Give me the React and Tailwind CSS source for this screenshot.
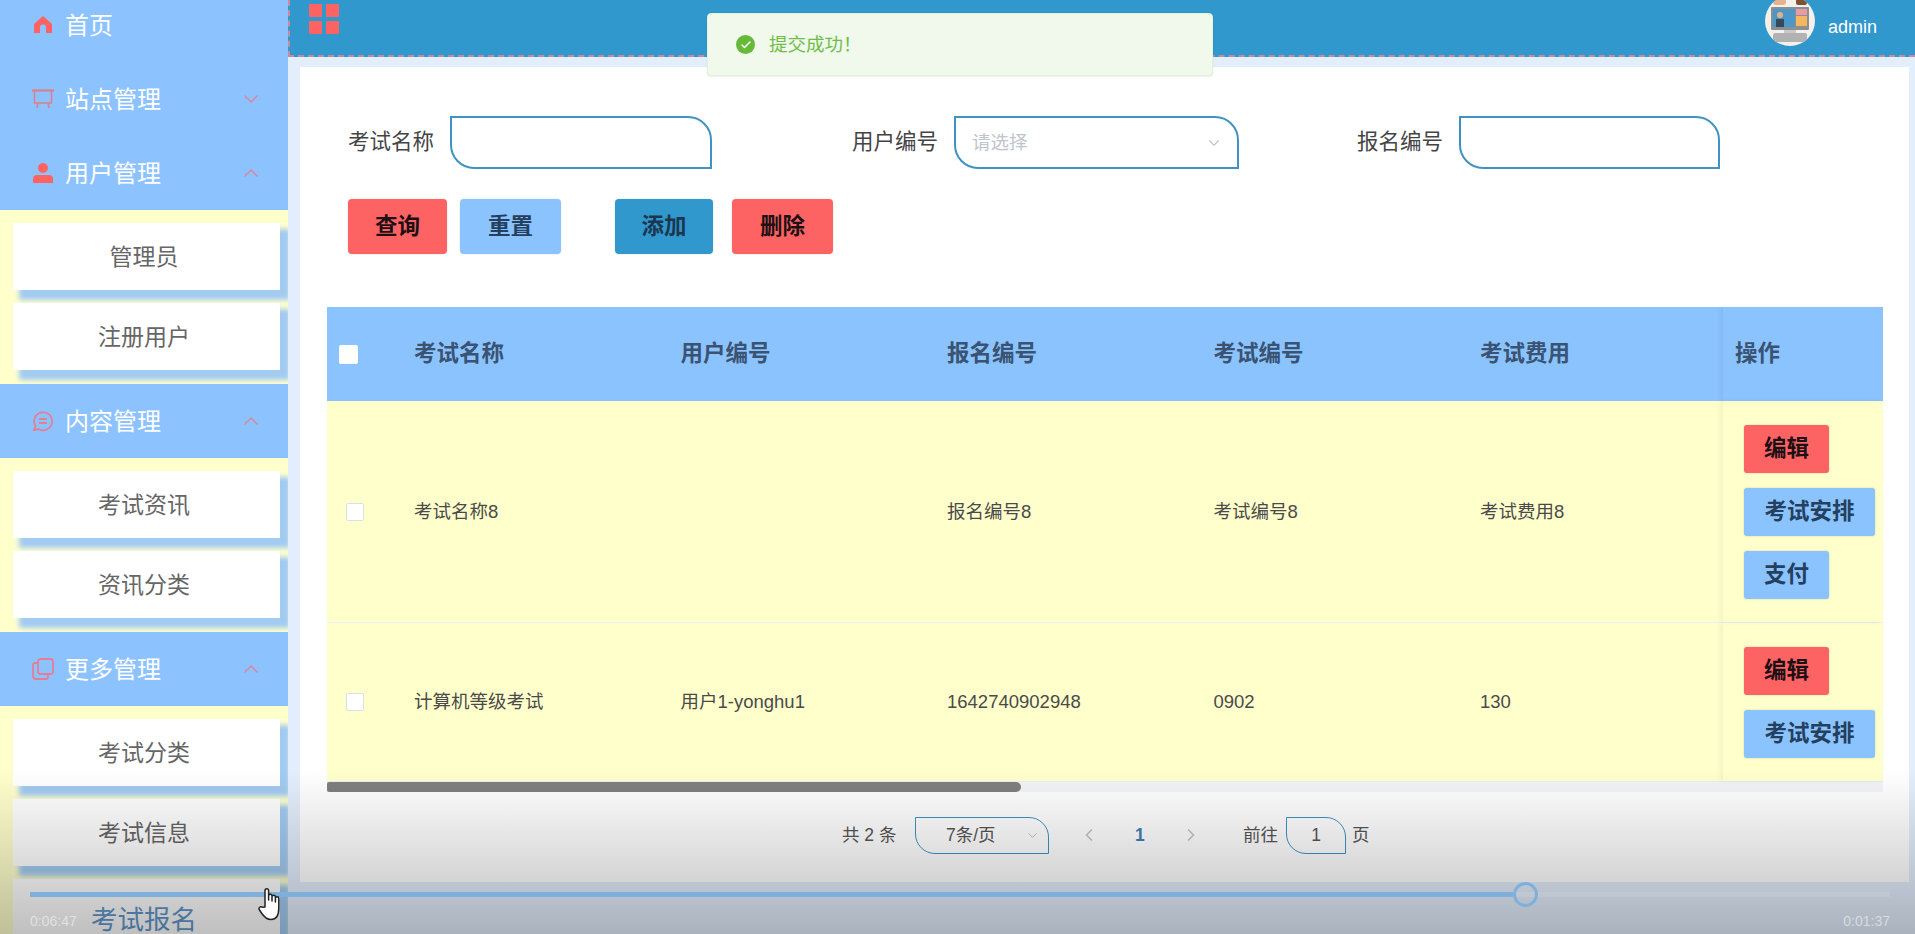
import { ChevronDown, ChevronUp, ChevronLeft, ChevronRight, Check } from "lucide-react";

const HomeIcon = () => (
  <svg viewBox="0 0 20 20" className="w-[20px] h-[20px] fill-[#fe6363]">
    <path d="M10 1 L19 9 V18 H13 V12.500 A3 3 0 0 0 7 12.500 V18 H1 V9 Z" />
  </svg>
);

const BoardIcon = () => (
  <svg viewBox="0 0 22 20" className="w-[22px] h-[20px] fill-none stroke-[#d9808e] stroke-[1.6]">
    <path d="M0 1.500 H22" strokeWidth="2.200" />
    <path d="M2.500 2 V14 H19.500 V2" />
    <path d="M6 14 L5 19 M16 14 L17 19" />
  </svg>
);

const UserIcon = () => (
  <svg viewBox="0 0 20 20" className="w-[20px] h-[20px] fill-[#fe6363]">
    <circle cx="10" cy="5" r="5" />
    <path d="M4 12 H16 A4 4 0 0 1 20 16 V20 H0 V16 A4 4 0 0 1 4 12 Z" />
  </svg>
);

const ChatIcon = () => (
  <svg viewBox="0 0 22 22" className="w-[22px] h-[22px] fill-none stroke-[#e37f94] stroke-[1.8]">
    <path d="M2 20 L3.500 16 A9 9 0 1 1 6.500 19 Z" />
    <path d="M7 9 H15 M7 13 H15" />
  </svg>
);

const CopyIcon = () => (
  <svg viewBox="0 0 22 22" className="w-[22px] h-[22px] fill-none stroke-[#e37f94] stroke-[1.8]">
    <rect x="6" y="1" width="15" height="15" rx="2.500" />
    <path d="M6 5 H3 A2 2 0 0 0 1 7 V18 A3 3 0 0 0 4 21 H14 A2 2 0 0 0 16 19 V16" />
  </svg>
);

const Logo = () => (
  <svg viewBox="0 0 30 30" className="w-[30px] h-[30px] fill-[#fe6363]">
    <rect x="0" y="0" width="13" height="13" rx="1" />
    <rect x="17" y="0" width="13" height="13" rx="1" />
    <rect x="0" y="17" width="13" height="13" rx="1" />
    <rect x="17" y="17" width="13" height="13" rx="1" />
  </svg>
);

const Avatar = () => (
  <svg viewBox="0 0 50 50" className="w-[50px] h-[50px] rounded-full bg-[#f4f1ec] shrink-0">
    <rect x="8" y="3" width="13" height="6" rx="3" fill="#eab08e" />
    <rect x="31" y="3" width="11" height="6" rx="2" fill="#7d5232" />
    <rect x="6" y="11" width="38" height="23" rx="1" fill="#8c8f92" />
    <rect x="8" y="13" width="22" height="18" fill="#4b97c7" />
    <circle cx="15" cy="19" r="3" fill="#e0b08c" />
    <rect x="11" y="23" width="8" height="8" fill="#34495c" />
    <rect x="31" y="13" width="11" height="6" fill="#ea9aa5" />
    <rect x="31" y="20" width="11" height="10" fill="#f4b760" />
    <rect x="19" y="34" width="12" height="3" fill="#c9c9c9" />
    <rect x="8" y="37" width="34" height="9" rx="2" fill="#b2b2b2" />
  </svg>
);

const HandCursor = () => (
  <svg viewBox="0 0 26 34" className="w-[26px] h-[34px] fill-white stroke-[#222] stroke-[1.500]" strokeLinejoin="round" strokeLinecap="round">
    <path d="M7 20 V3.500 A1.800 1.800 0 0 1 10.600 3.500 V13 V9 A1.700 1.700 0 0 1 14 9 V14 V10 A1.700 1.700 0 0 1 17.400 10 V15 V11.500 A1.700 1.700 0 0 1 20.800 11.500 V21 C20.800 27 19 32.500 13 32.500 C8 32.500 5.500 29 3.500 26 L1.200 22.500 C0.300 20.800 2.500 19 4.200 20.200 Z" />
  </svg>
);

function SubItem({ label, active }) {
  return (
    <div className={`h-[67px] ml-[13px] mr-[8px] pr-[5px] shrink-0 flex items-center justify-center bg-white shadow-[8px_8px_5px_2px_#a2cbf2] ${active ? "text-[#5f97cc] text-[26.500px] pt-[16px]" : "text-[#666] text-[23px] pt-[2px]"}`}>
      {label}
    </div>
  );
}

function MenuGroup({ icon, label, open, arrow, items = [] }) {
  return (
    <div className="shrink-0">
      <div className="h-[74px] bg-[#8cc3ff] flex items-center pl-[32px] pr-[25px]">
        <span className="w-[22px] flex justify-center">{icon}</span>
        <span className="ml-[11px] text-[24px] text-white mt-[2px]">{label}</span>
        <span className="ml-auto text-[#e07f96]">
          {arrow === "down" && <ChevronDown size={24} strokeWidth={1.300} />}
          {arrow === "up" && <ChevronUp size={24} strokeWidth={1.300} />}
        </span>
      </div>
      {open && (
        <div className="bg-[#ffffcc] pt-[13px] pb-[14px] flex flex-col gap-[13px]">
          {items.map((it) => (
            <SubItem key={it} label={it} active={it === "考试报名"} />
          ))}
        </div>
      )}
    </div>
  );
}

function FormField({ label, children, width = "w-[504px]" }) {
  return (
    <div className={`${width} flex items-center`}>
      <span className="text-[21.500px] text-[#444] mr-[16px]">{label}</span>
      {children}
    </div>
  );
}

const fancyBorder = "border-2 border-[#3e93c4] rounded-tl-none rounded-br-none rounded-tr-[24px] rounded-bl-[24px]";

function Btn({ children, color, width }) {
  const c = color === "red" ? "bg-[#fe6363] text-[#1d1014]" : color === "blue" ? "bg-[#8bc3ff] text-[#24405f]" : "bg-[#3198cd] text-[#1b3650]";
  return (
    <button type="button" className={`${c} ${width} h-[55px] rounded-[4px] font-bold text-[22.500px] shadow-[0_0_2px_rgba(0,0,0,0.15)]`}>
      {children}
    </button>
  );
}

function ActionBtn({ children, color, wide }) {
  return (
    <button type="button" className={`${color === "red" ? "bg-[#fe6363] text-[#1d1014]" : "bg-[#8bc3ff] text-[#24405f]"} ${wide ? "w-[131px]" : "w-[85px]"} h-[48px] rounded-[3px] font-bold text-[22.500px] shadow-[0_0_2px_rgba(0,0,0,0.2)]`}>
      {children}
    </button>
  );
}

const columns = "grid grid-cols-[75px_266.500px_266.500px_266.500px_266.500px_255px_160px]";
const headers = ["考试名称", "用户编号", "报名编号", "考试编号", "考试费用"];

const rows = [
  { h: "h-[222px]", cells: ["考试名称8", "", "报名编号8", "考试编号8", "考试费用8"], pay: true },
  { h: "h-[159px]", cells: ["计算机等级考试", "用户1-yonghu1", "1642740902948", "0902", "130"], pay: false },
];

export default function App() {
  return (
    <div className="relative flex h-screen w-full overflow-hidden bg-[#e3eefc] font-['Liberation_Sans','Noto_Sans_CJK_SC',sans-serif]">
      {/* Sidebar */}
      <aside className="w-[288px] shrink-0 flex flex-col -mt-[12px] bg-[#8cc3ff] overflow-hidden">
        <MenuGroup icon={<HomeIcon />} label="首页" />
        <MenuGroup icon={<BoardIcon />} label="站点管理" arrow="down" />
        <MenuGroup icon={<UserIcon />} label="用户管理" arrow="up" open items={["管理员", "注册用户"]} />
        <MenuGroup icon={<ChatIcon />} label="内容管理" arrow="up" open items={["考试资讯", "资讯分类"]} />
        <MenuGroup icon={<CopyIcon />} label="更多管理" arrow="up" open items={["考试分类", "考试信息", "考试报名"]} />
      </aside>

      {/* Main */}
      <main className="flex-1 min-w-0 flex flex-col">
        <header className="h-[57px] shrink-0 bg-[#3198cd] border-b-2 border-l-2 border-dashed border-[#c88a9f] flex items-center pl-[19px] pr-[38px]">
          <div className="-mt-[18px]"><Logo /></div>
          <div className="ml-auto flex items-center -mt-[13px]">
            <Avatar />
            <span className="ml-[13px] text-[18px] text-white mt-[13px]">admin</span>
          </div>
        </header>

        <section className="mt-[10px] ml-[12px] mr-[6px] h-[815px] bg-white pl-[27px] pr-[26px] pt-[49px] flex flex-col">
          <div className="flex pl-[21px] h-[53px]">
            <FormField label="考试名称">
              <input className={`${fancyBorder} w-[262px] h-[53px] bg-white outline-none`} />
            </FormField>
            <FormField label="用户编号" width="w-[505px]">
              <div className={`${fancyBorder} w-[285px] h-[53px] flex items-center justify-between pl-[16px] pr-[14px] bg-white`}>
                <span className="text-[18.500px] text-[#c0c4cc]">请选择</span>
                <ChevronDown size={18} strokeWidth={1.500} className="text-[#c0c4cc]" />
              </div>
            </FormField>
            <FormField label="报名编号">
              <input className={`${fancyBorder} w-[261px] h-[53px] bg-white outline-none`} />
            </FormField>
          </div>

          <div className="flex items-center pl-[21px] mt-[30px]">
            <Btn color="red" width="w-[99px]">查询</Btn>
            <div className="ml-[13px]"><Btn color="blue" width="w-[101px]">重置</Btn></div>
            <div className="ml-[54px]"><Btn color="teal" width="w-[98px]">添加</Btn></div>
            <div className="ml-[19px]"><Btn color="red" width="w-[101px]">删除</Btn></div>
          </div>

          {/* Table */}
          <div className="mt-[53px] w-[1556px]">
            <div className={`${columns} h-[94px] bg-[#8bc3ff] items-center text-[22.500px] font-bold text-[#3a5373]`}>
              <div className="pl-[12px]">
                <span className="block w-[19px] h-[19px] bg-white rounded-[2px]" />
              </div>
              {headers.map((h) => (
                <div key={h} className="pl-[12px]">{h}</div>
              ))}
              <div className="pl-[12px] h-full flex items-center shadow-[-3px_0_5px_rgba(0,0,0,0.05)]">操作</div>
            </div>

            {rows.map((r) => (
              <div key={r.cells[0]} className={`${columns} ${r.h} bg-[#ffffcc] items-center border-b border-[#ebeef5] text-[18.500px] text-[#4a4a4a]`}>
                <div className="pl-[19px]">
                  <span className="block w-[18px] h-[18px] bg-white border border-[#dcdfe6] rounded-[2px]" />
                </div>
                {r.cells.map((c, i) => (
                  <div key={i} className="pl-[12px]">{c}</div>
                ))}
                <div className="h-full pl-[21px] flex flex-col justify-center items-start gap-[15px] shadow-[-3px_0_5px_rgba(0,0,0,0.05)]">
                  <ActionBtn color="red">编辑</ActionBtn>
                  <ActionBtn color="blue" wide>考试安排</ActionBtn>
                  {r.pay && <ActionBtn color="blue">支付</ActionBtn>}
                </div>
              </div>
            ))}

            <div className="h-[10px] bg-[#f3f4f7]">
              <div className="w-[694px] h-full bg-[#7f7f7f] rounded-r-[5px] rounded-l-[2px]" />
            </div>
          </div>

          {/* Pagination */}
          <div className="mt-[24px] h-[38px] flex items-center pl-[515px] text-[17.500px] text-[#555]">
            <span className="w-[73px]">共 2 条</span>
            <div className="w-[134px] h-[37px] border-[1.500px] border-[#3e93c4] rounded-tr-[20px] rounded-bl-[20px] flex items-center pl-[30px] pr-[8px]">
              <span>7条/页</span>
              <ChevronDown size={15} strokeWidth={1.500} className="ml-auto text-[#bbb]" />
            </div>
            <ChevronLeft size={20} strokeWidth={2} className="ml-[30px] text-[#c0c4cc]" />
            <span className="ml-[36px] w-[10px] font-bold text-[#3f7fb5]">1</span>
            <ChevronRight size={20} strokeWidth={2} className="ml-[36px] text-[#c0c4cc]" />
            <span className="ml-[42px]">前往</span>
            <div className="ml-[8px] w-[60px] h-[37px] border-[1.500px] border-[#3e93c4] rounded-tr-[20px] rounded-bl-[20px] flex items-center justify-center">1</div>
            <span className="ml-[6px]">页</span>
          </div>
        </section>
      </main>

      {/* Toast */}
      <div className="absolute left-[707px] top-[13px] w-[506px] h-[63px] bg-[#f0f9eb] border border-[#e1f3d8] rounded-[4px] flex items-center pl-[28px] shadow-[0_1px_2px_rgba(0,0,0,0.08)]">
        <span className="w-[19px] h-[19px] rounded-full bg-[#67b93a] flex items-center justify-center">
          <Check size={12} strokeWidth={3} className="text-white" />
        </span>
        <span className="ml-[14px] text-[18.500px] text-[#6fbd47]">提交成功！</span>
      </div>

      {/* Video player overlay */}
      <div className="absolute inset-x-0 bottom-0 h-[164px] bg-gradient-to-b from-black/0 to-black/25 pointer-events-none" />
      <div className="absolute left-[30px] right-[25px] top-[892px] h-[5px] bg-white/10">
        <div className="w-[1483px] h-full bg-[#7fb0dc]" />
      </div>
      <div className="absolute left-[1513px] top-[882px] w-[25px] h-[25px] rounded-full border-[3px] border-[#7fb0dc]" />
      <span className="absolute left-[30px] top-[911px] text-[14px] text-white/50">0:06:47</span>
      <span className="absolute right-[25px] top-[911px] text-[14px] text-white/50">0:01:37</span>
      <div className="absolute left-[258px] top-[887px]"><HandCursor /></div>
    </div>
  );
}
